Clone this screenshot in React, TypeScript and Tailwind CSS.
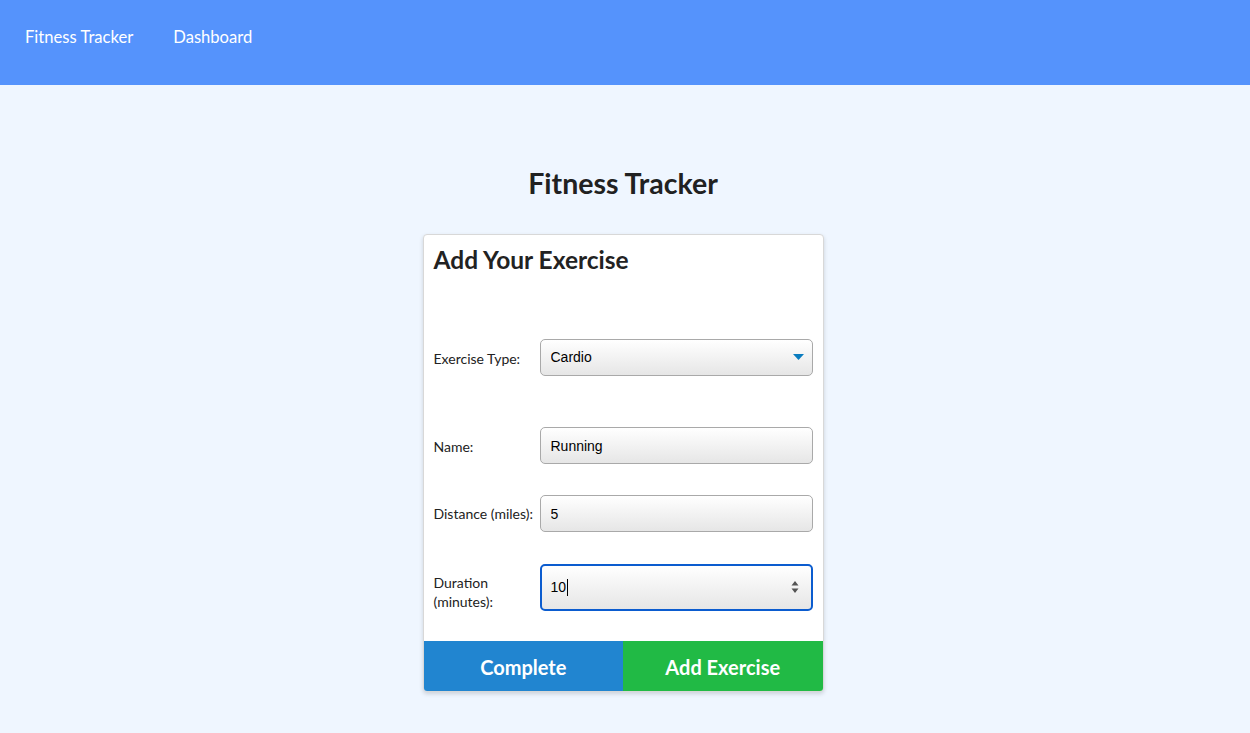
import React from "react";

const inputClass =
  "h-[37px] w-full rounded-[5px] border border-[#a9a9a9] bg-gradient-to-b from-white to-[#e6e6e6] px-[10px] text-[14px] text-black outline-none [font-family:Arial,'Liberation_Sans',sans-serif]";

function Row({
  label,
  labelClass = "",
  children,
}: {
  label: string;
  labelClass?: string;
  children: React.ReactNode;
}) {
  return (
    <div className="flex items-center">
      <label className={"w-[106px] shrink-0 text-[14px] leading-[19px] text-[#222] " + labelClass}>
        {label}
      </label>
      <div className="flex-1">{children}</div>
    </div>
  );
}

export default function App() {
  return (
    <div className="min-h-[733px] bg-[#eff6ff] [font-family:Lato,'Open_Sans',sans-serif]">
      <nav className="flex h-[85px] items-start gap-[40px] bg-[#5593fc] px-[25px] pt-[26px] text-[16.6px] leading-[22px] text-white">
        <a href="#">Fitness Tracker</a>
        <a href="#">Dashboard</a>
      </nav>

      <div className="pr-[4px]">
        <h1 className="mt-[81px] text-center text-[28.5px] font-bold leading-[34px] text-[#212121]">
          Fitness Tracker
        </h1>

        <div className="mx-auto mt-[34px] w-[401px] overflow-hidden rounded-[4px] border border-[#d8d8d8] bg-white shadow-[0_2px_4px_rgba(0,0,0,0.15)]">
          <div className="px-[10px] pt-[10px] pb-[30px]">
            <h2 className="text-[24.5px] font-bold leading-[29px] text-[#222]">Add Your Exercise</h2>

            <div className="mt-[65px]">
              <Row label="Exercise Type:" labelClass="pt-[2px]">
                <div className="relative">
                  <select defaultValue="cardio" className={inputClass + " appearance-none"}>
                    <option value="cardio">Cardio</option>
                    <option value="resistance">Resistance</option>
                  </select>
                  <svg
                    className="pointer-events-none absolute right-[9px] top-[15px]"
                    width="11"
                    height="6"
                    viewBox="0 0 11 6"
                  >
                    <path d="M0 0h11L5.5 6z" fill="#0a7cbf" />
                  </svg>
                </div>
              </Row>
            </div>

            <div className="mt-[51px] flex flex-col gap-[31px]">
              <Row label="Name:" labelClass="pt-[1px]">
                <input className={inputClass} defaultValue="Running" />
              </Row>
              <Row label="Distance (miles):">
                <input className={inputClass} defaultValue="5" />
              </Row>
              <div className="mt-px">
                <Row label="Duration (minutes):" labelClass="pt-[8px]">
                  <div className="relative">
                    <div className="flex h-[47px] w-full items-center rounded-[5px] border-2 border-[#0b5ccf] bg-gradient-to-b from-white to-[#e6e6e6] px-[9px] text-[14px] text-black [font-family:Arial,'Liberation_Sans',sans-serif]">
                      10<span className="ml-px inline-block h-[17px] w-px bg-black" />
                    </div>
                    <svg
                      className="pointer-events-none absolute right-[14px] top-[17px]"
                      width="8"
                      height="12"
                      viewBox="0 0 8 12"
                    >
                      <path d="M4 0l3.5 4.5h-7zM4 12l3.5-4.5h-7z" fill="#555" />
                    </svg>
                  </div>
                </Row>
              </div>
            </div>
          </div>

          <div className="flex h-[50px] text-[20px] font-bold leading-[24px] text-white">
            <button className="flex-1 bg-[#2185d0] pt-[2px]">Complete</button>
            <button className="flex-1 bg-[#21ba45] pt-[2px]">Add Exercise</button>
          </div>
        </div>
      </div>
    </div>
  );
}
